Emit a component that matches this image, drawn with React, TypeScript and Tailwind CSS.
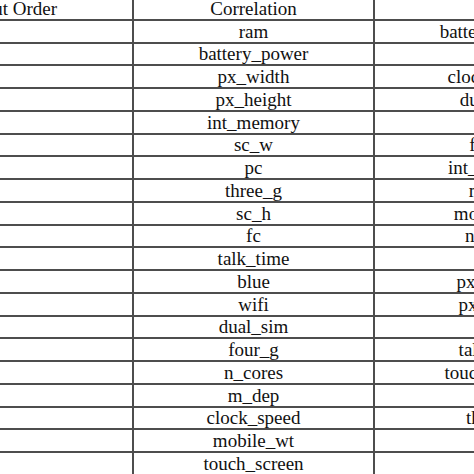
import React from "react";

const rows: [string, string][] = [
  ["ram", "battery_power"],
  ["battery_power", "blue"],
  ["px_width", "clock_speed"],
  ["px_height", "dual_sim"],
  ["int_memory", "fc"],
  ["sc_w", "four_g"],
  ["pc", "int_memory"],
  ["three_g", "m_dep"],
  ["sc_h", "mobile_wt"],
  ["fc", "n_cores"],
  ["talk_time", "pc"],
  ["blue", "px_height"],
  ["wifi", "px_width"],
  ["dual_sim", "ram"],
  ["four_g", "talk_time"],
  ["n_cores", "touch_screen"],
  ["m_dep", "sc_h"],
  ["clock_speed", "three_g"],
  ["mobile_wt", "sc_w"],
  ["touch_screen", "wifi"],
];

function Row({ cells }: { cells: string[] }) {
  return (
    <div className="flex h-[22.75px] border-b-2 border-[#4d4d4d]">
      {cells.map((c, i) => (
        <div
          key={i}
          className="w-[241px] shrink-0 border-r-2 border-[#4d4d4d] flex items-center justify-center leading-none whitespace-nowrap"
        >
          {c}
        </div>
      ))}
    </div>
  );
}

export default function App() {
  return (
    <div className="w-[474px] h-[474px] overflow-hidden bg-white">
      <div
        className="ml-[-107px] mt-[-2px] w-[964px] text-[19px] text-[#111111]"
        style={{ fontFamily: '"Liberation Serif", "Times New Roman", serif' }}
      >
        <Row cells={["Input Order", "Correlation", "", ""]} />
        {rows.map((r, i) => (
          <Row key={i} cells={["", r[0], r[1], ""]} />
        ))}
      </div>
    </div>
  );
}
